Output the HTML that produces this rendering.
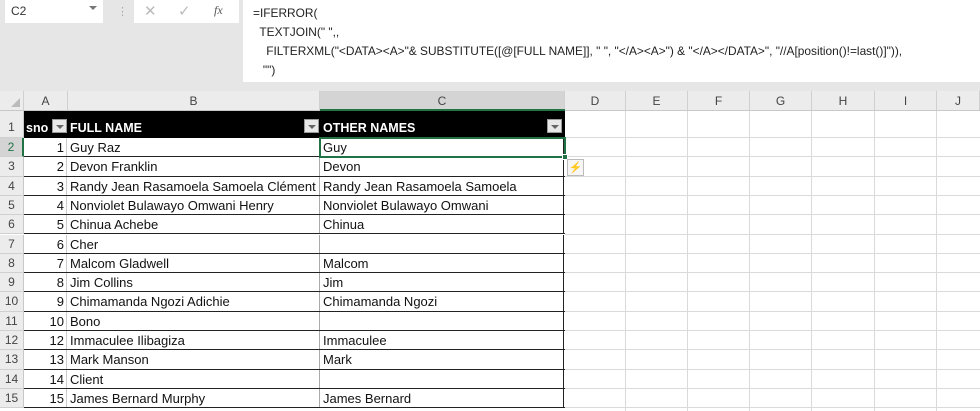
<!DOCTYPE html>
<html><head><meta charset="utf-8"><style>
*{margin:0;padding:0;box-sizing:border-box}
body{width:980px;height:411px;overflow:hidden;background:#fff;font-family:"Liberation Sans",sans-serif;position:relative}
.abs{position:absolute}
.top{left:0;top:0;width:980px;height:91px;background:#e6e6e6}
.nb{left:5px;top:0;width:98px;height:23px;background:#fff;font-size:12px;color:#333;padding:4px 6px}
.fb{left:243px;top:0;width:737px;height:82px;background:#fff;font-size:11.9px;color:#222;line-height:19px;padding:4px 0 0 10px;white-space:pre}
.ch{top:91px;height:20px;background:#ececec;border-right:1px solid #d0d0d0;border-bottom:1px solid #c8c8c8;text-align:center;font-size:12px;color:#444;line-height:20px}
.rh{left:0;width:24px;background:#ececec;border-bottom:1px solid #d0d0d0;border-right:1px solid #c8c8c8;text-align:center;font-size:12px;color:#444}
.row{left:24px;width:541px;border-bottom:1px solid #222}
.c{position:absolute;top:0;height:100%;font-size:13px;color:#111;white-space:nowrap;overflow:hidden}
.gl{position:absolute;top:111px;height:300px;width:1px;background:#dadada}
.hl{position:absolute;left:565px;width:415px;height:1px;background:#dadada}
.dd{position:absolute;width:15px;height:14px;background:#e8e8e8;border:1px solid #999}
.dd:after{content:"";position:absolute;left:3px;top:5px;border:4px solid transparent;border-top:4px solid #666;border-bottom:0}
</style></head><body>
<div class="abs top"></div>
<div class="abs nb">C2<span style="position:absolute;right:6px;top:6px;border:4px solid transparent;border-top:4px solid #777;border-bottom:0"></span></div>
<div class="abs" style="left:117px;top:5px;font-size:11px;color:#aaa">⋮</div>
<div class="abs" style="left:134px;top:0;width:105px;height:23px;background:#fff"></div>
<div class="abs" style="left:144px;top:2px;font-size:15px;color:#bbb">✕</div>
<div class="abs" style="left:178px;top:2px;font-size:15px;color:#bbb">✓</div>
<div class="abs" style="left:214px;top:3px;font-size:12px;color:#555;font-style:italic;font-family:'Liberation Serif',serif">fx</div>
<div class="abs fb">=IFERROR(
  TEXTJOIN(" ",,
    FILTERXML("&lt;DATA&gt;&lt;A&gt;"&amp; SUBSTITUTE([@[FULL NAME]], " ", "&lt;/A&gt;&lt;A&gt;") &amp; "&lt;/A&gt;&lt;/DATA&gt;", "//A[position()!=last()]")),
   "")</div>
<div class="abs ch" style="left:0;width:24px;background:#ececec"><span style="position:absolute;right:3px;bottom:3px;border-left:9px solid transparent;border-bottom:9px solid #bbb"></span></div>
<div class="abs ch" style="left:24px;width:44px">A</div>
<div class="abs ch" style="left:68px;width:252px">B</div>
<div class="abs ch" style="left:320px;width:245px;background:#d4d4d4;border-bottom:2px solid #217346">C</div>
<div class="abs ch" style="left:565px;width:61px">D</div>
<div class="abs ch" style="left:626px;width:62px">E</div>
<div class="abs ch" style="left:688px;width:62px">F</div>
<div class="abs ch" style="left:750px;width:62px">G</div>
<div class="abs ch" style="left:812px;width:63px">H</div>
<div class="abs ch" style="left:875px;width:62px">I</div>
<div class="abs ch" style="left:937px;width:43px">J</div>
<div class="gl" style="left:625px"></div><div class="gl" style="left:687px"></div><div class="gl" style="left:749px"></div><div class="gl" style="left:811px"></div><div class="gl" style="left:874px"></div><div class="gl" style="left:936px"></div>
<div id="g"></div>
<div class="abs rh" style="top:111px;height:27px;line-height:32px">1</div>
<div class="abs" style="left:24px;top:111px;width:541px;height:27px;background:#000;color:#fff;font-weight:bold;font-size:12.5px">
<span class="abs" style="left:2px;top:10px">sno</span><div class="dd" style="left:28px;top:8px"></div>
<span class="abs" style="left:46px;top:10px">FULL NAME</span><div class="dd" style="left:280px;top:8px"></div>
<span class="abs" style="left:299px;top:10px">OTHER NAMES</span><div class="dd" style="left:523px;top:8px"></div>
</div>
<div class="abs" style="left:320px;top:109px;width:245px;height:2px;background:#217346"></div>
<script>
var d=[[1,"Guy Raz","Guy"],[2,"Devon Franklin","Devon"],[3,"Randy Jean Rasamoela Samoela Clément","Randy Jean Rasamoela Samoela"],[4,"Nonviolet Bulawayo Omwani Henry","Nonviolet Bulawayo Omwani"],[5,"Chinua Achebe","Chinua"],[6,"Cher",""],[7,"Malcom Gladwell","Malcom"],[8,"Jim Collins","Jim"],[9,"Chimamanda Ngozi Adichie","Chimamanda Ngozi"],[10,"Bono",""],[12,"Immaculee Ilibagiza","Immaculee"],[13,"Mark Manson","Mark"],[14,"Client",""],[15,"James Bernard Murphy","James Bernard"]];
var h="";
for(var i=0;i<d.length;i++){var t=138+i*19.3,hh=19.3;
h+='<div class="abs rh" style="top:'+t+'px;height:'+hh+'px;line-height:19px;'+(i==0?'background:#d4d4d4;border-right:2px solid #217346;color:#217346':'')+'">'+(i+2)+'</div>';
h+='<div class="abs row" style="top:'+t+'px;height:'+hh+'px;line-height:19px"><div class="c" style="left:0;width:43px;text-align:right;padding-right:2px;border-right:1px solid #ccc">'+d[i][0]+'</div><div class="c" style="left:44px;width:252px;padding-left:2px;border-right:1px solid #aaa">'+d[i][1]+'</div><div class="c" style="left:297px;width:243px;padding-left:2px;border-right:1px solid #222">'+d[i][2]+'</div></div>';
h+='<div class="hl" style="top:'+(t+hh-1)+'px"></div>';}
document.getElementById("g").innerHTML=h;
</script>
<div class="hl" style="top:137px"></div>
<div class="abs" style="left:319px;top:137px;width:247px;height:21px;border:2px solid #217346"></div>
<div class="abs" style="left:562px;top:154px;width:6px;height:6px;background:#217346;border:1px solid #fff"></div>
<div class="abs" style="left:567px;top:159px;width:17px;height:17px;border:1px solid #bbb;background:#f6f6f6;color:#e8a000;font-size:11px;text-align:center;line-height:16px">⚡</div>
</body></html>
